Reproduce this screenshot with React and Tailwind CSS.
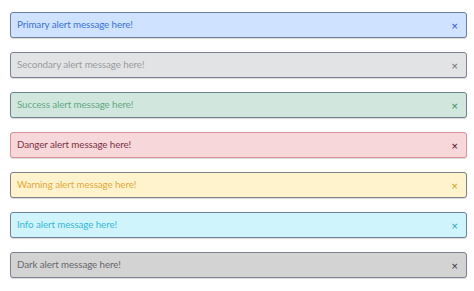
import React from "react";

const alerts = [
  { name: "Primary", box: "bg-[#cfe2ff] border-[#6f7f9b]", text: "text-[#3d72d6]", x: "text-[#3a62c8]" },
  { name: "Secondary", box: "bg-[#e2e3e5] border-[#7b8191]", text: "text-[#9a9ca0]", x: "text-[#75787e]" },
  { name: "Success", box: "bg-[#d1e7dd] border-[#71808f]", text: "text-[#64a883]", x: "text-[#4a8f6a]" },
  { name: "Danger", box: "bg-[#f8d7da] border-[#d9929a]", text: "text-[#7c3444]", x: "text-[#5a2632]" },
  { name: "Warning", box: "bg-[#fff3cd] border-[#7e8287]", text: "text-[#e2a93a]", x: "text-[#d9a32a]" },
  { name: "Info", box: "bg-[#cff4fc] border-[#6f8098]", text: "text-[#3bb8d8]", x: "text-[#3aa8c4]" },
  { name: "Dark", box: "bg-[#d3d3d4] border-[#7d8290]", text: "text-[#67696d]", x: "text-[#44464a]" },
];

const Alert = ({ alert }) => (
  <div
    className={`flex items-center justify-between h-[26px] border rounded-[3px] shadow-[0_1px_1px_rgba(0,0,0,0.15)] pl-[6px] pr-[8px] ${alert.box}`}
  >
    <span className={`text-[9.8px] leading-none tracking-[-0.1px] ${alert.text}`}>
      {alert.name} alert message here!
    </span>
    <span className={`text-[11px] leading-none font-semibold ${alert.x}`}>×</span>
  </div>
);

export default function App() {
  return (
    <div
      className="w-[474px] h-[291px] bg-white pt-[12px] pl-[10px] pr-[7px] flex flex-col gap-[14px]"
      style={{ fontFamily: 'Lato, "Noto Sans", sans-serif' }}
    >
      {alerts.map((a) => (
        <Alert key={a.name} alert={a} />
      ))}
    </div>
  );
}
